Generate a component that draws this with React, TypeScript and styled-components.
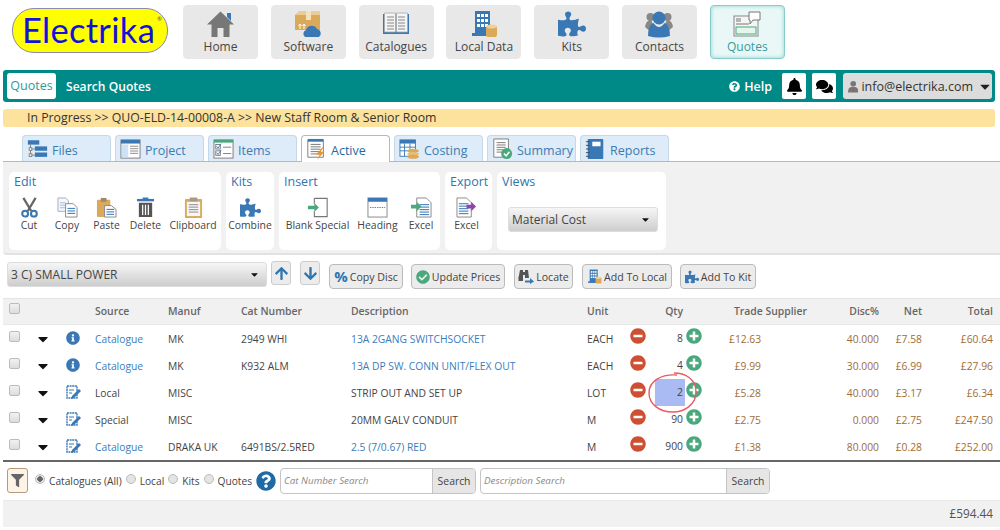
import React from "react"
import styled, { createGlobalStyle } from "styled-components"
import {
  FaArrowDown,
  FaArrowUp,
  FaBell,
  FaCaretDown,
  FaCheckCircle,
  FaComments,
  FaFilter,
  FaInfoCircle,
  FaMinusCircle,
  FaPlusCircle,
  FaPuzzlePiece,
  FaQuestionCircle,
} from "react-icons/fa"

const GlobalStyle = createGlobalStyle`
  html, body {
    margin: 0;
    padding: 0;
    background: #fff;
    font-family: "Open Sans", "Liberation Sans", sans-serif;
    color: #333;
  }
  * { box-sizing: border-box; }
`

const Page = styled.div`
  width: 1000px;
  height: 530px;
  overflow: hidden;
`

const TopRow = styled.div`
  display: flex;
  align-items: flex-start;
  height: 70px;
  padding: 5px 0 0 12px;
`

const Logo = styled.div`
  width: 156px;
  height: 45px;
  margin-top: 3px;
  margin-right: 15px;
  padding-right: 3px;
  border-radius: 22px;
  background: #ffff00;
  border: 1px solid #8a8ab0;
  color: #1212dc;
  font-family: Lato, "Liberation Sans", sans-serif;
  font-size: 34.5px;
  letter-spacing: 0.3px;
  line-height: 41px;
  text-align: center;
  position: relative;
`

const Registered = styled.span`
  position: absolute;
  right: 5px;
  top: 7px;
  font-size: 6px;
  line-height: 6px;
  letter-spacing: 0;
  color: #555;
`

const NavList = styled.div`
  display: flex;
  gap: 12.8px;
`

const NavButton = styled.div<{ $active?: boolean }>`
  width: 75px;
  height: 54px;
  border-radius: 4px;
  background: ${(p) => (p.$active ? "#e9f8f7" : "#e8e8e8")};
  border: ${(p) => (p.$active ? "1px solid #86cdc9" : "1px solid #e8e8e8")};
  box-shadow: ${(p) => (p.$active ? "inset 0 0 4px #8ed3cf" : "none")};
  color: ${(p) => (p.$active ? "#3a9a9a" : "#444")};
  font-size: 12px;
  line-height: 16px;
  text-align: center;
  display: flex;
  flex-direction: column;
  align-items: center;
  justify-content: flex-end;
  padding-bottom: 3px;
  white-space: nowrap;
`

const NavIcon = styled.div`
  height: 28px;
  display: flex;
  align-items: center;
  justify-content: center;
  margin-bottom: 1px;
`

const TealBar = styled.div`
  display: flex;
  align-items: center;
  height: 32px;
  margin: 0 5px 0 3px;
  padding: 0 3px 0 4px;
  background: #008a87;
  border-radius: 3px;
  font-size: 12.5px;
  color: #fff;
`

const TealTab = styled.div`
  height: 26px;
  width: 49px;
  line-height: 26px;
  text-align: center;
  background: #fff;
  color: #2b9b9b;
  border-radius: 3px;
  margin-right: 10px;
`

const TealLink = styled.div`
  font-size: 12.1px;
  font-weight: 600;
`

const Spacer = styled.div`
  flex: 1;
`

const HelpLink = styled.div`
  display: flex;
  align-items: center;
  gap: 4px;
  font-weight: 600;
  margin-right: 10px;
`

const WhiteSquare = styled.div`
  width: 24px;
  height: 26px;
  margin-right: 6px;
  background: #fff;
  border-radius: 2px;
  color: #000;
  display: flex;
  align-items: center;
  justify-content: center;
`

const UserBox = styled.div`
  width: 149px;
  height: 26px;
  margin-left: 1px;
  background: #dcdcdc;
  border-radius: 3px;
  color: #333;
  display: flex;
  align-items: center;
  padding: 0 1px 0 5px;
  gap: 3px;
`

const Breadcrumb = styled.div`
  height: 18px;
  margin: 7px 5px 0 3px;
  padding-left: 24px;
  background: #fce29c;
  border-radius: 3px;
  font-size: 12.3px;
  line-height: 18px;
  color: #333;
`

const TabRow = styled.div`
  display: flex;
  gap: 4px;
  height: 27px;
  margin: 8px 0 0 3px;
  padding-left: 19px;
  border-bottom: 1px solid #a9bccb;
`

const Tab = styled.div<{ $active?: boolean }>`
  width: 89px;
  height: ${(p) => (p.$active ? "27px" : "26px")};
  display: flex;
  align-items: center;
  gap: 4px;
  padding: 3px 0 0 4px;
  border: 1px solid ${(p) => (p.$active ? "#a9bccb" : "#c5d8e8")};
  border-bottom: none;
  border-radius: 4px 4px 0 0;
  background: ${(p) => (p.$active ? "#fff" : "#deebf8")};
  color: ${(p) => (p.$active ? "#1f6aa5" : "#3b7cb3")};
  font-size: 12.5px;
`

const TabIcon = styled.div`
  width: 21px;
  height: 21px;
  margin-top: -3px;
  display: flex;
  align-items: center;
  justify-content: center;
  flex-shrink: 0;
`

const Toolbar = styled.div`
  display: flex;
  gap: 5px;
  height: 93px;
  margin-left: 3px;
  padding: 10px 0 0 6px;
  background: #f1f1f1;
  border-bottom: 2px solid #e2e2e2;
  border-radius: 0 0 0 4px;
`

const Panel = styled.div<{ $width: number }>`
  width: ${(p) => p.$width}px;
  height: 78px;
  background: #fff;
  border-radius: 5px;
  padding: 1px 0 0 5px;
`

const PanelTitle = styled.div`
  font-size: 12.5px;
  line-height: 17px;
  color: #2f75b0;
`

const ToolItems = styled.div`
  display: flex;
  margin-top: 6px;
`

const ToolItem = styled.div<{ $width: number }>`
  width: ${(p) => p.$width}px;
  display: flex;
  flex-direction: column;
  align-items: center;
  font-size: 10.4px;
  line-height: 14px;
  color: #444;
  white-space: nowrap;
`

const ToolIcon = styled.div`
  height: 22px;
  display: flex;
  align-items: center;
  justify-content: center;
`

const FakeSelect = styled.div<{ $width: number; $height: number }>`
  width: ${(p) => p.$width}px;
  height: ${(p) => p.$height}px;
  display: flex;
  align-items: center;
  justify-content: space-between;
  padding: 0 6px 0 3px;
  border-radius: 3px;
  border: 1px solid #ddd;
  background: linear-gradient(#f6f6f6, #cdcdcd);
  font-size: 12px;
  color: #444;
`

const ViewSelect = styled.div`
  margin: 17px 0 0 6px;
`

const ActionRow = styled.div`
  display: flex;
  align-items: flex-start;
  height: 43px;
  padding: 7px 0 0 7px;
`

const ArrowButton = styled.div<{ $gap: number }>`
  width: 20px;
  height: 24px;
  margin-top: -1px;
  margin-left: ${(p) => p.$gap}px;
  border: 1px solid #ccc;
  border-radius: 3px;
  background: #ececec;
  color: #2f75b0;
  display: flex;
  align-items: center;
  justify-content: center;
`

const ActionButton = styled.div<{ $width: number; $gap?: number }>`
  width: ${(p) => p.$width}px;
  height: 25px;
  margin-top: 2px;
  margin-left: ${(p) => p.$gap ?? 9}px;
  border: 1px solid #bbb;
  border-radius: 4px;
  background: #ececec;
  font-size: 10.6px;
  color: #444;
  display: flex;
  align-items: center;
  justify-content: center;
  gap: 2px;
  white-space: nowrap;
`

const Percent = styled.span`
  font-size: 15px;
  font-weight: 700;
  line-height: 15px;
  color: #2f75b0;
`

const columns =
  "31px 18px 39px 73px 73px 110px 236px 40px 30px 32px 40px 86px 72px 43px 71px"

const HeaderRow = styled.div`
  display: grid;
  grid-template-columns: ${columns};
  align-items: center;
  height: 27px;
  margin-left: 3px;
  padding-bottom: 2px;
  background: #f1f1f1;
  border-top: 1px solid #e4e4e4;
  border-bottom: 1px solid #e8e8e8;
  font-size: 10.4px;
  font-weight: 600;
  color: #666;
`

const DataRow = styled.div`
  display: grid;
  grid-template-columns: ${columns};
  align-items: center;
  height: 27px;
  margin-left: 3px;
  font-size: 10.3px;
  color: #444;
  position: relative;
`

const Cell = styled.div<{ $right?: boolean; $pad?: number; $tone?: string }>`
  padding: 0 ${(p) => p.$pad ?? 4}px 0 4px;
  text-align: ${(p) => (p.$right ? "right" : "left")};
  color: ${(p) => p.$tone ?? "inherit"};
  white-space: nowrap;
`

const IconCell = styled.div<{ $offset?: number; $inset?: number }>`
  display: flex;
  justify-content: center;
  align-items: center;
  margin-top: ${(p) => p.$offset ?? 0}px;
  padding-left: ${(p) => p.$inset ?? 0}px;
`

const CheckCell = styled.div`
  display: flex;
  padding-left: 6px;
  margin-top: -4px;
`

const Check = styled.span`
  width: 11px;
  height: 11px;
  border: 1px solid #bbb;
  border-radius: 2px;
  background: linear-gradient(#f2f2f2, #dcdcdc);
`

const QtyCell = styled.div<{ $selected?: boolean }>`
  height: 27px;
  line-height: 27px;
  width: 30px;
  margin-left: 2px;
  text-align: right;
  padding-right: 2px;
  background: ${(p) => (p.$selected ? "#a9bbf2" : "transparent")};
`

const PlusCell = styled.div`
  display: flex;
  margin-top: -6px;
  padding-left: 1px;
`

const Ring = styled.svg`
  position: absolute;
  left: 644px;
  top: -7px;
  pointer-events: none;
`

const FilterRow = styled.div`
  display: flex;
  align-items: center;
  height: 39px;
  margin-left: 3px;
  padding-left: 4px;
  border-top: 2px solid #666;
  font-size: 10.2px;
  color: #444;
`

const FilterButton = styled.div`
  width: 21px;
  height: 25px;
  margin-right: 7px;
  border: 1px solid #b59a7c;
  border-radius: 3px;
  background: #fdf3e7;
  color: #666;
  display: flex;
  align-items: center;
  justify-content: center;
`

const RadioLabel = styled.div`
  display: flex;
  align-items: center;
  gap: 4px;
  margin-right: 4px;
  white-space: nowrap;
`

const Radio = styled.span<{ $on?: boolean }>`
  width: 10px;
  height: 10px;
  margin-top: -3px;
  border-radius: 50%;
  border: 1px solid #bbb;
  background: ${(p) =>
    p.$on ? "radial-gradient(#666 0 2.5px, #e8e8e8 3px)" : "#e4e4e4"};
`

const SearchGroup = styled.div<{ $width: number; $gap: number }>`
  width: ${(p) => p.$width}px;
  height: 26px;
  margin-left: ${(p) => p.$gap}px;
  display: flex;
  border: 1px solid #c4c4c4;
  border-radius: 4px;
  overflow: hidden;
  background: #fff;
`

const SearchText = styled.div`
  flex: 1;
  padding-left: 3px;
  line-height: 24px;
  font-size: 9.8px;
  font-style: italic;
  color: #888;
`

const SearchAddon = styled.div`
  width: 43px;
  line-height: 24px;
  text-align: center;
  font-size: 10.4px;
  background: #e6e6e6;
  border-left: 1px solid #c4c4c4;
  color: #444;
`

const Footer = styled.div`
  height: 27px;
  margin: 1px 0 0 3px;
  padding-right: 7px;
  background: #f1f1f1;
  border-top: 1px solid #e8e8e8;
  text-align: right;
  line-height: 24px;
  font-size: 11.8px;
  color: #555;
`

const blue = "#3a78b5"
const orange = "#dba95a"
const green = "#4aa87c"

const HomeIcon = () => (
  <svg width="27" height="26" viewBox="0 0 27 26">
    <path d="M20 2 H24 V10 L20 6 Z" fill={blue} />
    <path d="M13.5 0.5 L27 13.5 H22.5 V26 H16.5 V17 H10.5 V26 H4.5 V13.5 H0 Z" fill="#777" />
  </svg>
)

const Building = ({ size = 28 }: { size?: number }) => (
  <svg width={size} height={size} viewBox="0 0 28 28">
    <rect x="5" y="1" width="15" height="24" fill={blue} />
    <rect x="2" y="23" width="15" height="3" fill={blue} />
    {[4, 9, 14].map((y) =>
      [7, 11, 15].map((x) => (
        <rect key={`${x}-${y}`} x={x} y={y} width="3" height="3" fill="#fff" />
      ))
    )}
    <rect x="16" y="16" width="11" height="11" rx="2" fill={orange} />
    <ellipse cx="21.5" cy="16.5" rx="5.5" ry="2" fill="#f2cf96" />
  </svg>
)

const Software = () => (
  <svg width="28" height="28" viewBox="0 0 28 28">
    <path d="M1 5 L6 1 H26 V20 H1 Z" fill={orange} />
    <path d="M1 5 H26 L26 1 H6 Z" fill="#eccb94" />
    <rect x="12" y="1" width="5" height="9" fill="#f4e2bf" />
    <path d="M6 19 V14 M10 19 V14 M4.5 16 L6 14 L7.5 16 M8.5 16 L10 14 L11.5 16" stroke="#fff" fill="none" />
    <path d="M11 27 a4 4 0 0 1 1 -7 a6 6 0 0 1 11 -1 a4.5 4.5 0 0 1 2 8 Z" fill={blue} />
  </svg>
)

const Book = () => (
  <svg width="28" height="24" viewBox="0 0 28 24">
    <path d="M1 2 H27 V22 H1 Z" fill={blue} />
    <path d="M2.5 1 H13.5 V20 H2.5 Z M14.5 1 H25.5 V20 H14.5 Z" fill="#f4f4f4" stroke="#aaa" strokeWidth="0.8" />
    {[5, 8, 11, 14, 17].map((y) => (
      <path key={y} d={`M5 ${y} H12 M16 ${y} H23`} stroke="#888" strokeWidth="1.2" />
    ))}
  </svg>
)

const People = () => (
  <svg width="28" height="28" viewBox="0 0 28 28">
    <circle cx="5.5" cy="7" r="4" fill="#888" />
    <circle cx="22.5" cy="7" r="4" fill="#888" />
    <path d="M0 17 Q1 10 6 10 L10 18 L6 22 Z M28 17 Q27 10 22 10 L18 18 L22 22 Z" fill="#888" />
    <circle cx="14" cy="8" r="6.5" fill={blue} />
    <path d="M3 26 Q3 15 8.5 13 Q14 21 19.5 13 Q25 15 25 26 Q14 29 3 26 Z" fill={blue} />
  </svg>
)

const QuoteIcon = () => (
  <svg width="28" height="26" viewBox="0 0 28 26">
    <rect x="1" y="5" width="24" height="20" fill="#f5f5f5" stroke="#888" />
    <path d="M3 8 H8 M3 10 H8 M3 13 H16" stroke="#777" />
    <rect x="3" y="16" width="20" height="7" fill="#e6f6ee" stroke={green} />
    <path d="M16 1 H27 V9 H20 L17 13 V9 H16 Z" fill="#fff" stroke="#777" />
  </svg>
)

const DocLines = ({ x, y, w, n, color = "#4a86c0" }: { x: number; y: number; w: number; n: number; color?: string }) => (
  <>
    {Array.from({ length: n }, (_, i) => (
      <path key={i} d={`M${x} ${y + i * 2.6} H${x + w}`} stroke={color} strokeWidth="1.2" />
    ))}
  </>
)

const FilesIcon = () => (
  <svg width="21" height="20" viewBox="0 0 24 22">
    <rect x="1" y="1" width="13" height="5" fill={blue} />
    <rect x="9" y="8" width="14" height="5" fill={blue} />
    <rect x="9" y="15" width="14" height="5" fill={blue} />
    <path d="M4 6 V18 H9 M4 11 H9" stroke="#777" fill="none" />
    <rect x="2.5" y="9.5" width="3" height="3" fill="#fff" stroke="#777" />
    <rect x="2.5" y="16.5" width="3" height="3" fill="#fff" stroke="#777" />
  </svg>
)

const ProjectIcon = () => (
  <svg width="21" height="20" viewBox="0 0 23 22">
    <rect x="1" y="1" width="21" height="20" fill="#fff" stroke="#777" />
    <rect x="1" y="1" width="21" height="4" fill={blue} />
    <rect x="2" y="6" width="7" height="14" fill="#cde3f5" />
    <DocLines x={11} y={8} w={9} n={4} color="#999" />
  </svg>
)

const ItemsIcon = () => (
  <svg width="21" height="20" viewBox="0 0 23 22">
    <rect x="1" y="1" width="21" height="20" fill="#fff" stroke="#777" />
    <rect x="1" y="1" width="21" height="3" fill={green} />
    <rect x="3" y="6" width="5" height="5" fill="#fff" stroke="#777" />
    <rect x="3" y="13" width="5" height="5" fill="#fff" stroke="#777" />
    <path d="M4 8 L5.5 10 L9 5 M4 15 L5.5 17 L9 12" stroke={blue} fill="none" />
    <path d="M11 9 H20 M11 16 H20" stroke="#777" />
  </svg>
)

const ActiveIcon = () => (
  <svg width="21" height="22" viewBox="0 0 23 24">
    <path d="M2 2 H19 V21 H2 Z" fill="#fff" stroke="#777" />
    <rect x="2" y="1" width="17" height="3" fill={blue} />
    <DocLines x={5} y={7} w={11} n={5} color="#888" />
    <path d="M18 10 L11 18 H15 L12 24 L20 15 H16 L19 10 Z" fill="#e8952c" />
  </svg>
)

const CostingIcon = () => (
  <svg width="21" height="20" viewBox="0 0 23 22">
    <rect x="1" y="1" width="17" height="18" fill="#fff" stroke={blue} />
    <rect x="1" y="1" width="17" height="4" fill={blue} />
    <path d="M1 9 H18 M1 13 H18 M6 5 V19 M12 5 V19" stroke={blue} />
    <ellipse cx="15.5" cy="13" rx="6.5" ry="2.2" fill={orange} />
    <ellipse cx="15.5" cy="16.5" rx="6.5" ry="2.2" fill="#e8bd78" />
    <ellipse cx="15.5" cy="19.5" rx="6.5" ry="2.2" fill={orange} />
  </svg>
)

const SummaryIcon = () => (
  <svg width="21" height="22" viewBox="0 0 23 24">
    <path d="M2 1 H18 V21 H2 Z" fill="#fff" stroke="#777" />
    <DocLines x={5} y={5} w={10} n={5} color="#888" />
    <circle cx="16" cy="17" r="6" fill={green} />
    <path d="M13 17 L15.5 19.5 L19 15" stroke="#fff" strokeWidth="1.6" fill="none" />
  </svg>
)

const ReportsIcon = () => (
  <svg width="21" height="22" viewBox="0 0 23 24">
    <rect x="3" y="1" width="17" height="22" rx="1" fill={blue} />
    <rect x="8" y="4" width="9" height="5" fill="#fff" />
    <path d="M1 4 H5 M1 8 H5 M1 12 H5 M1 16 H5 M1 20 H5" stroke="#444" />
  </svg>
)

const CutIcon = () => (
  <svg width="19" height="21" viewBox="0 0 20 24">
    <path d="M3 1 L12 16 M17 1 L8 16" stroke="#666" strokeWidth="2.6" />
    <circle cx="5" cy="19" r="3.3" fill="none" stroke={blue} strokeWidth="2.4" />
    <circle cx="15" cy="19" r="3.3" fill="none" stroke={blue} strokeWidth="2.4" />
  </svg>
)

const CopyIcon = () => (
  <svg width="21" height="21" viewBox="0 0 22 22">
    <path d="M1 1 H9 L12 4 V15 H1 Z" fill="#f4f8fb" stroke="#aab" />
    <DocLines x={3} y={6} w={6} n={3} color="#a9c6e0" />
    <path d="M9 7 H17 L21 11 V21 H9 Z" fill="#fff" stroke="#888" />
    <DocLines x={11} y={12} w={8} n={3} />
  </svg>
)

const PasteIcon = () => (
  <svg width="21" height="21" viewBox="0 0 22 22">
    <rect x="1" y="3" width="14" height="18" rx="1" fill={orange} />
    <rect x="5" y="1" width="6" height="4" fill="#998a70" />
    <path d="M9 9 H16 L21 13 V21 H9 Z" fill="#fff" stroke="#888" />
    <DocLines x={11} y={13} w={8} n={3} />
  </svg>
)

const DeleteIcon = () => (
  <svg width="19" height="21" viewBox="0 0 20 22">
    <rect x="1" y="2" width="18" height="2.5" fill={blue} />
    <rect x="7" y="0.5" width="6" height="2" fill={blue} />
    <path d="M3 6 H17 V21 H3 Z" fill="#555" />
    <path d="M7 8 V19 M10 8 V19 M13 8 V19" stroke="#fff" strokeWidth="1.3" />
  </svg>
)

const ClipboardIcon = () => (
  <svg width="19" height="21" viewBox="0 0 20 22">
    <rect x="1" y="2" width="18" height="20" rx="1" fill={orange} />
    <rect x="3" y="5" width="14" height="15" fill="#f6f6f6" />
    <rect x="6" y="0.5" width="8" height="4" fill="#a89a80" />
    <DocLines x={5} y={8} w={10} n={4} color="#999" />
  </svg>
)

const BlankSpecialIcon = () => (
  <svg width="22" height="21" viewBox="0 0 24 22">
    <path d="M8 1 H22 V21 H8 V15 M8 7 V1" fill="none" stroke="#777" strokeWidth="1.2" />
    <path d="M1 9 H8 V6 L13 11 L8 16 V13 H1 Z" fill={green} />
  </svg>
)

const HeadingIcon = () => (
  <svg width="21" height="21" viewBox="0 0 22 22">
    <rect x="1" y="1" width="20" height="20" fill="#fff" stroke="#888" />
    <rect x="1" y="1" width="20" height="4" fill={blue} />
    <path d="M3 11 H19" stroke="#777" strokeDasharray="1.5 1" />
  </svg>
)

const ImportIcon = () => (
  <svg width="21" height="21" viewBox="0 0 22 22">
    <path d="M6 1 H16 L21 6 V21 H6 Z" fill="#fff" stroke="#888" />
    <DocLines x={9} y={8} w={10} n={5} />
    <path d="M0 8 H6 V5 L11 10 L6 15 V12 H0 Z" fill={green} />
  </svg>
)

const ExportIcon = () => (
  <svg width="21" height="21" viewBox="0 0 22 22">
    <path d="M1 1 H11 L16 6 V21 H1 Z" fill="#fff" stroke="#888" />
    <DocLines x={3} y={7} w={10} n={5} />
    <path d="M11 8 H16 V5 L21 10 L16 15 V12 H11 Z" fill="#8e44ad" />
  </svg>
)

const LocateIcon = () => (
  <svg width="16" height="15" viewBox="0 0 16 15">
    <path d="M2 1 H5 V3 H7 V1 H10 L11 9 H7 V6 H5 V9 H0.5 Z" fill="#555" />
    <rect x="0.5" y="8" width="4.5" height="4" fill="#555" />
    <path d="M7 11.5 H12 V9 L16 12.5 L12 15 V13.5 H7 Z" fill={blue} />
  </svg>
)

const EditNote = () => (
  <svg width="16" height="16" viewBox="0 0 16 16">
    <path d="M2 2 H12 V14 H2 Z" fill="#fff" stroke={blue} strokeWidth="1.4" strokeDasharray="2 0.6" />
    <path d="M4 6 H9 M4 9 H7" stroke={blue} />
    <path d="M14 5 L7 12 L6 15 L9 14 L16 7 Z" fill={blue} />
  </svg>
)

const UserIcon = () => (
  <svg width="13" height="15" viewBox="0 0 13 15">
    <circle cx="6.5" cy="4" r="3.5" fill="#777" />
    <path d="M0 15 Q0 8.5 4 8 H9 Q13 8.5 13 15 Z" fill="#777" />
    <path d="M6 9 H7.5 L8 14 H6 Z" fill="#c94f3d" />
  </svg>
)

const navItems = [
  { label: "Home", icon: <HomeIcon /> },
  { label: "Software", icon: <Software /> },
  { label: "Catalogues", icon: <Book /> },
  { label: "Local Data", icon: <Building /> },
  { label: "Kits", icon: <FaPuzzlePiece size={28} color={blue} /> },
  { label: "Contacts", icon: <People /> },
  { label: "Quotes", icon: <QuoteIcon />, active: true },
]

const tabs = [
  { label: "Files", icon: <FilesIcon /> },
  { label: "Project", icon: <ProjectIcon /> },
  { label: "Items", icon: <ItemsIcon /> },
  { label: "Active", icon: <ActiveIcon />, active: true },
  { label: "Costing", icon: <CostingIcon /> },
  { label: "Summary", icon: <SummaryIcon /> },
  { label: "Reports", icon: <ReportsIcon /> },
]

const rows = [
  { info: true, source: "Catalogue", manuf: "MK", cat: "2949 WHI", desc: "13A 2GANG SWITCHSOCKET", unit: "EACH", qty: "8", trade: "£12.63", disc: "40.000", net: "£7.58", total: "£60.64" },
  { info: true, source: "Catalogue", manuf: "MK", cat: "K932 ALM", desc: "13A DP SW. CONN UNIT/FLEX OUT", unit: "EACH", qty: "4", trade: "£9.99", disc: "30.000", net: "£6.99", total: "£27.96" },
  { source: "Local", manuf: "MISC", cat: "", desc: "STRIP OUT AND SET UP", unit: "LOT", qty: "2", trade: "£5.28", disc: "40.000", net: "£3.17", total: "£6.34", selected: true },
  { source: "Special", manuf: "MISC", cat: "", desc: "20MM GALV CONDUIT", unit: "M", qty: "90", trade: "£2.75", disc: "0.000", net: "£2.75", total: "£247.50" },
  { source: "Catalogue", manuf: "DRAKA UK", cat: "6491BS/2.5RED", desc: "2.5 (7/0.67) RED", unit: "M", qty: "900", trade: "£1.38", disc: "80.000", net: "£0.28", total: "£252.00" },
]

const linkBlue = "#3a7dbb"
const money = "#a06c35"

export default function App() {
  return (
    <Page>
      <GlobalStyle />
      <TopRow>
        <Logo>
          Electrika
          <Registered>®</Registered>
        </Logo>
        <NavList>
          {navItems.map((item) => (
            <NavButton key={item.label} $active={item.active}>
              <NavIcon>{item.icon}</NavIcon>
              {item.label}
            </NavButton>
          ))}
        </NavList>
      </TopRow>

      <TealBar>
        <TealTab>Quotes</TealTab>
        <TealLink>Search Quotes</TealLink>
        <Spacer />
        <HelpLink>
          <FaQuestionCircle size={11} />
          Help
        </HelpLink>
        <WhiteSquare>
          <FaBell size={17} />
        </WhiteSquare>
        <WhiteSquare>
          <FaComments size={17} />
        </WhiteSquare>
        <UserBox>
          <UserIcon />
          info@electrika.com
          <Spacer />
          <FaCaretDown size={15} color="#222" />
        </UserBox>
      </TealBar>

      <Breadcrumb>In Progress &gt;&gt; QUO-ELD-14-00008-A &gt;&gt; New Staff Room &amp; Senior Room</Breadcrumb>

      <TabRow>
        {tabs.map((tab) => (
          <Tab key={tab.label} $active={tab.active}>
            <TabIcon>{tab.icon}</TabIcon>
            {tab.label}
          </Tab>
        ))}
      </TabRow>

      <Toolbar>
        <Panel $width={212}>
          <PanelTitle>Edit</PanelTitle>
          <ToolItems>
            <ToolItem $width={30}><ToolIcon><CutIcon /></ToolIcon>Cut</ToolItem>
            <ToolItem $width={46}><ToolIcon><CopyIcon /></ToolIcon>Copy</ToolItem>
            <ToolItem $width={33}><ToolIcon><PasteIcon /></ToolIcon>Paste</ToolItem>
            <ToolItem $width={45}><ToolIcon><DeleteIcon /></ToolIcon>Delete</ToolItem>
            <ToolItem $width={50}><ToolIcon><ClipboardIcon /></ToolIcon>Clipboard</ToolItem>
          </ToolItems>
        </Panel>
        <Panel $width={48}>
          <PanelTitle>Kits</PanelTitle>
          <ToolItems>
            <ToolItem $width={38}><ToolIcon><FaPuzzlePiece size={21} color={blue} /></ToolIcon>Combine</ToolItem>
          </ToolItems>
        </Panel>
        <Panel $width={161}>
          <PanelTitle>Insert</PanelTitle>
          <ToolItems>
            <ToolItem $width={67}><ToolIcon><BlankSpecialIcon /></ToolIcon>Blank Special</ToolItem>
            <ToolItem $width={53}><ToolIcon><HeadingIcon /></ToolIcon>Heading</ToolItem>
            <ToolItem $width={34}><ToolIcon><ImportIcon /></ToolIcon>Excel</ToolItem>
          </ToolItems>
        </Panel>
        <Panel $width={47}>
          <PanelTitle>Export</PanelTitle>
          <ToolItems>
            <ToolItem $width={33}><ToolIcon><ExportIcon /></ToolIcon>Excel</ToolItem>
          </ToolItems>
        </Panel>
        <Panel $width={169}>
          <PanelTitle>Views</PanelTitle>
          <ViewSelect>
            <FakeSelect $width={150} $height={25}>
              Material Cost
              <FaCaretDown size={11} color="#111" />
            </FakeSelect>
          </ViewSelect>
        </Panel>
      </Toolbar>

      <ActionRow>
        <FakeSelect $width={260} $height={25}>
          3 C) SMALL POWER
          <FaCaretDown size={11} color="#111" />
        </FakeSelect>
        <ArrowButton $gap={4}><FaArrowUp size={15} /></ArrowButton>
        <ArrowButton $gap={9}><FaArrowDown size={15} /></ArrowButton>
        <ActionButton $width={74}><Percent>%</Percent>Copy Disc</ActionButton>
        <ActionButton $width={94} $gap={8}><FaCheckCircle size={14} color={green} />Update Prices</ActionButton>
        <ActionButton $width={59}><LocateIcon />Locate</ActionButton>
        <ActionButton $width={90}><Building size={15} />Add To Local</ActionButton>
        <ActionButton $width={76} $gap={8}><FaPuzzlePiece size={14} color={blue} />Add To Kit</ActionButton>
      </ActionRow>

      <HeaderRow>
        <CheckCell><Check /></CheckCell>
        <div />
        <div />
        <Cell>Source</Cell>
        <Cell>Manuf</Cell>
        <Cell>Cat Number</Cell>
        <Cell>Description</Cell>
        <Cell>Unit</Cell>
        <div />
        <Cell $right $pad={2}>Qty</Cell>
        <div />
        <Cell $right>Trade Supplier</Cell>
        <Cell $right>Disc%</Cell>
        <Cell $right>Net</Cell>
        <Cell $right>Total</Cell>
      </HeaderRow>

      {rows.map((row) => (
        <DataRow key={row.desc}>
          <CheckCell><Check /></CheckCell>
          <IconCell><FaCaretDown size={16} color="#111" /></IconCell>
          <IconCell $offset={-1} $inset={3}>
            {row.info ? <FaInfoCircle size={14} color={blue} /> : <EditNote />}
          </IconCell>
          <Cell $tone={row.source === "Catalogue" ? linkBlue : undefined}>{row.source}</Cell>
          <Cell>{row.manuf}</Cell>
          <Cell>{row.cat}</Cell>
          <Cell $tone={row.source === "Catalogue" ? linkBlue : undefined}>{row.desc}</Cell>
          <Cell>{row.unit}</Cell>
          <IconCell $offset={-6}><FaMinusCircle size={16} color="#cf4f33" /></IconCell>
          <QtyCell $selected={row.selected}>{row.qty}</QtyCell>
          <PlusCell><FaPlusCircle size={16} color={green} /></PlusCell>
          <Cell $right $pad={50} $tone={money}>{row.trade}</Cell>
          <Cell $right $tone={money}>{row.disc}</Cell>
          <Cell $right $tone={money}>{row.net}</Cell>
          <Cell $right $tone={money}>{row.total}</Cell>
          {row.selected && (
            <Ring width="52" height="42" viewBox="0 0 52 42">
              <path
                d="M27 1 C37 1 49 6 49 20 C49 33 37 40 26 40 C12 40 2 32 2 21 C2 9 14 2 30 3"
                fill="none"
                stroke="#ee5a62"
                strokeWidth="1.4"
              />
            </Ring>
          )}
        </DataRow>
      ))}

      <FilterRow>
        <FilterButton><FaFilter size={13} /></FilterButton>
        <RadioLabel><Radio $on />Catalogues (All)</RadioLabel>
        <RadioLabel><Radio />Local</RadioLabel>
        <RadioLabel><Radio />Kits</RadioLabel>
        <RadioLabel><Radio />Quotes</RadioLabel>
        <FaQuestionCircle size={20} color="#1f6aa5" />
        <SearchGroup $width={196} $gap={4}>
          <SearchText>Cat Number Search</SearchText>
          <SearchAddon>Search</SearchAddon>
        </SearchGroup>
        <SearchGroup $width={290} $gap={4}>
          <SearchText>Description Search</SearchText>
          <SearchAddon>Search</SearchAddon>
        </SearchGroup>
      </FilterRow>

      <Footer>£594.44</Footer>
    </Page>
  )
}
